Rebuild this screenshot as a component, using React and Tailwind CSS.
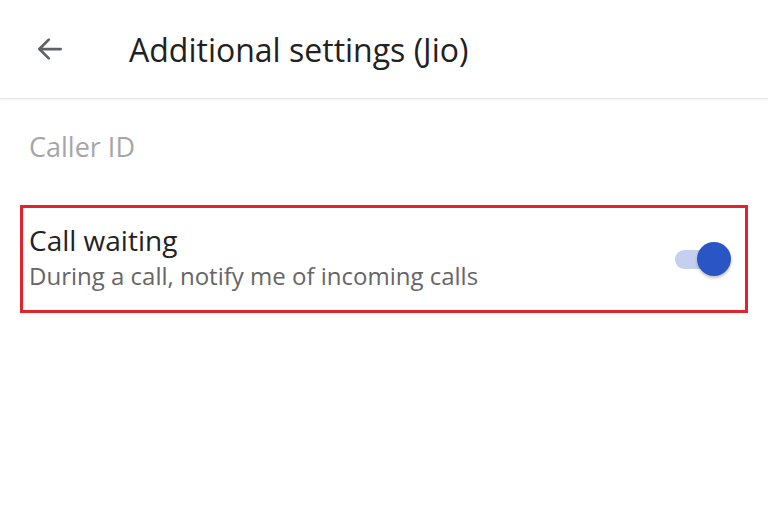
import React, { useState } from "react";

const App = () => {
  const [callWaiting, setCallWaiting] = useState(true);

  return (
    <div className="w-[768px] h-[523px] bg-white overflow-hidden" style={{ fontFamily: '"Open Sans", "Noto Sans", sans-serif' }}>
      {/* Header */}
      <div className="h-[99px] flex items-center border-b border-[#e6e6e6] shadow-[0_1px_2px_rgba(0,0,0,0.06)]">
        <button className="ml-[34px] w-[32px] h-[32px] flex items-center justify-center text-[#5f6368]">
          <svg width="30" height="30" viewBox="0 0 24 24" fill="none" stroke="currentColor" strokeWidth="2.2" strokeLinecap="round" strokeLinejoin="round">
            <path d="M20.5 12H4" />
            <path d="M11 4.5L3.5 12l7.5 7.5" />
          </svg>
        </button>
        <h1 className="ml-[63px] text-[32px] text-[#212121] pt-[2px]">Additional settings (Jio)</h1>
      </div>

      {/* Caller ID */}
      <div className="px-[29px] pt-[29px] h-[106px]">
        <span className="text-[27px] leading-[38px] text-[#a6a6a6]">Caller ID</span>
      </div>

      {/* Call waiting */}
      <div className="mx-[20px] border-[3px] border-[#e3232b] h-[108px] flex items-center justify-between pl-[6px] pr-[14px]">
        <div className="flex flex-col pb-[1px]">
          <span className="text-[28px] leading-[34px] text-[#222]">Call waiting</span>
          <span className="text-[24px] leading-[37px] text-[#666]">During a call, notify me of incoming calls</span>
        </div>
        <button
          onClick={() => setCallWaiting(!callWaiting)}
          className="relative w-[58px] h-[34px] flex items-center"
        >
          <span className={"absolute left-[2px] right-[6px] h-[19px] rounded-full " + (callWaiting ? "bg-[#c5d0ee]" : "bg-[#cfcfcf]")} />
          <span
            className={
              "absolute w-[34px] h-[34px] rounded-full shadow-[0_2px_3px_rgba(0,0,0,0.25)] " +
              (callWaiting ? "right-0 bg-[#2a55c5]" : "left-0 bg-[#f5f5f5]")
            }
          />
        </button>
      </div>
    </div>
  );
};

export default App;
